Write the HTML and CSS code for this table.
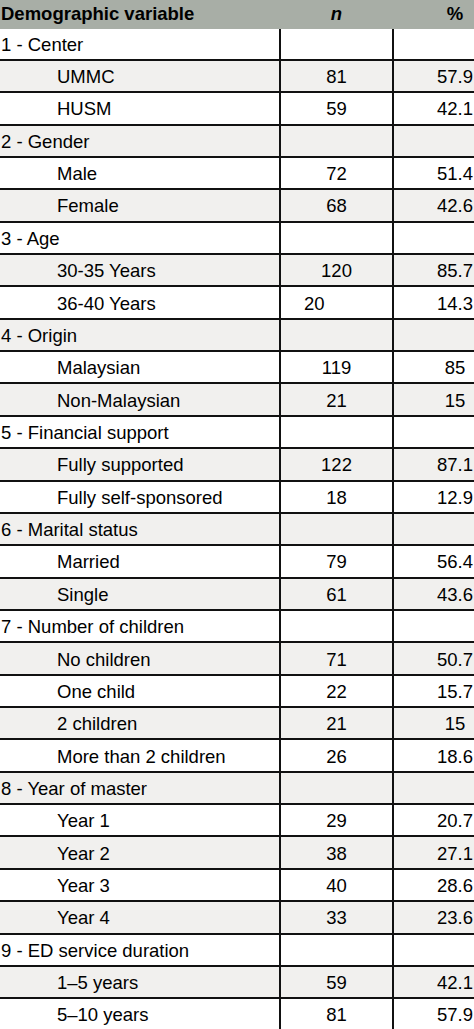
FILE: index.html
```html
<!DOCTYPE html>
<html lang="en">
<head>
<meta charset="utf-8">
<title>Demographic table</title>
<link rel="stylesheet" href="styles.css">
</head>
<body>
<div class="table">
  <div class="row head">
    <div class="cell label">Demographic variable</div>
    <div class="cell num"><i>n</i></div>
    <div class="cell pct">%</div>
  </div>
  <div class="row"><div class="cell label cat">1 - Center</div><div class="cell num"></div><div class="cell pct"></div></div>
  <div class="row"><div class="cell label sub">UMMC</div><div class="cell num">81</div><div class="cell pct">57.9</div></div>
  <div class="row"><div class="cell label sub">HUSM</div><div class="cell num">59</div><div class="cell pct">42.1</div></div>
  <div class="row"><div class="cell label cat">2 - Gender</div><div class="cell num"></div><div class="cell pct"></div></div>
  <div class="row"><div class="cell label sub">Male</div><div class="cell num">72</div><div class="cell pct">51.4</div></div>
  <div class="row"><div class="cell label sub">Female</div><div class="cell num">68</div><div class="cell pct">42.6</div></div>
  <div class="row"><div class="cell label cat">3 - Age</div><div class="cell num"></div><div class="cell pct"></div></div>
  <div class="row"><div class="cell label sub">30-35 Years</div><div class="cell num">120</div><div class="cell pct">85.7</div></div>
  <div class="row"><div class="cell label sub">36-40 Years</div><div class="cell num off">20</div><div class="cell pct">14.3</div></div>
  <div class="row"><div class="cell label cat">4 - Origin</div><div class="cell num"></div><div class="cell pct"></div></div>
  <div class="row"><div class="cell label sub">Malaysian</div><div class="cell num">119</div><div class="cell pct">85</div></div>
  <div class="row"><div class="cell label sub">Non-Malaysian</div><div class="cell num">21</div><div class="cell pct">15</div></div>
  <div class="row"><div class="cell label cat">5 - Financial support</div><div class="cell num"></div><div class="cell pct"></div></div>
  <div class="row"><div class="cell label sub">Fully supported</div><div class="cell num">122</div><div class="cell pct">87.1</div></div>
  <div class="row"><div class="cell label sub">Fully self-sponsored</div><div class="cell num">18</div><div class="cell pct">12.9</div></div>
  <div class="row"><div class="cell label cat">6 - Marital status</div><div class="cell num"></div><div class="cell pct"></div></div>
  <div class="row"><div class="cell label sub">Married</div><div class="cell num">79</div><div class="cell pct">56.4</div></div>
  <div class="row"><div class="cell label sub">Single</div><div class="cell num">61</div><div class="cell pct">43.6</div></div>
  <div class="row"><div class="cell label cat">7 - Number of children</div><div class="cell num"></div><div class="cell pct"></div></div>
  <div class="row"><div class="cell label sub">No children</div><div class="cell num">71</div><div class="cell pct">50.7</div></div>
  <div class="row"><div class="cell label sub">One child</div><div class="cell num">22</div><div class="cell pct">15.7</div></div>
  <div class="row"><div class="cell label sub">2 children</div><div class="cell num">21</div><div class="cell pct">15</div></div>
  <div class="row"><div class="cell label sub">More than 2 children</div><div class="cell num">26</div><div class="cell pct">18.6</div></div>
  <div class="row"><div class="cell label cat">8 - Year of master</div><div class="cell num"></div><div class="cell pct"></div></div>
  <div class="row"><div class="cell label sub">Year 1</div><div class="cell num">29</div><div class="cell pct">20.7</div></div>
  <div class="row"><div class="cell label sub">Year 2</div><div class="cell num">38</div><div class="cell pct">27.1</div></div>
  <div class="row"><div class="cell label sub">Year 3</div><div class="cell num">40</div><div class="cell pct">28.6</div></div>
  <div class="row"><div class="cell label sub">Year 4</div><div class="cell num">33</div><div class="cell pct">23.6</div></div>
  <div class="row"><div class="cell label cat">9 - ED service duration</div><div class="cell num"></div><div class="cell pct"></div></div>
  <div class="row"><div class="cell label sub">1–5 years</div><div class="cell num">59</div><div class="cell pct">42.1</div></div>
  <div class="row"><div class="cell label sub">5–10 years</div><div class="cell num">81</div><div class="cell pct">57.9</div></div>
</div>
</body>
</html>
```

FILE: styles.css
```css
html, body {
  margin: 0;
  padding: 0;
  background: #ffffff;
  overflow: hidden;
}

body {
  width: 474px;
  height: 1029px;
  font-family: "Liberation Sans", Arial, sans-serif;
  font-size: 18.5px;
  color: #000000;
}

.table {
  width: 516px;
  display: flex;
  flex-direction: column;
}

.row {
  display: grid;
  grid-template-columns: 279px 113px 124px;
  height: 32.37px;
  box-sizing: border-box;
  border-bottom: 2px solid #111111;
  background: #ffffff;
}

.row:nth-child(odd) {
  background: #f1f0ee;
}

.row.head {
  height: 28.5px;
  background: #a8aea6;
  border-bottom: none;
  font-weight: bold;
  font-size: 18.5px;
}

.cell {
  display: flex;
  align-items: center;
  white-space: nowrap;
  padding-top: 2px;
  box-sizing: border-box;
}

.head .cell {
  padding-top: 0;
  padding-bottom: 1px;
}

.label {
  padding-left: 1px;
}

.label.sub {
  padding-left: 57px;
}

.num, .pct {
  justify-content: center;
  border-left: 2px solid #111111;
}

.head .num, .head .pct {
  border-left-color: transparent;
}

.num.off {
  justify-content: flex-start;
  padding-left: 23px;
}
```
